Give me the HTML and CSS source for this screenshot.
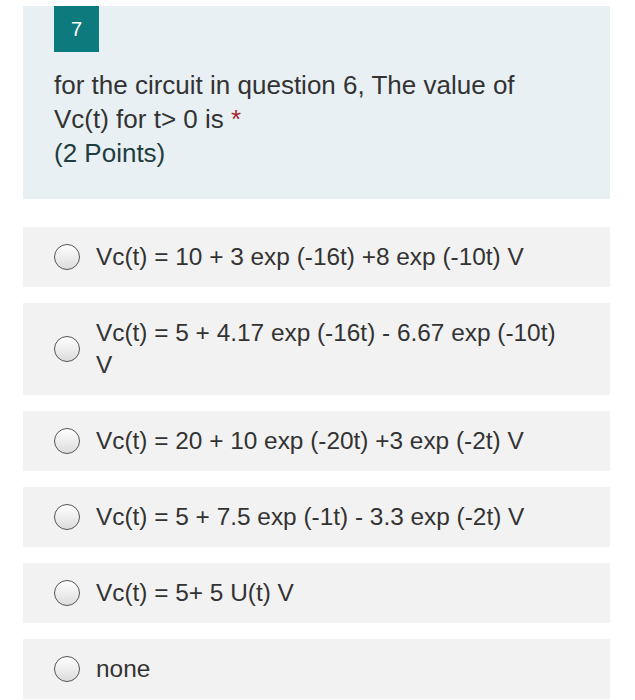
FILE: index.html
```html
<!DOCTYPE html>
<html>
<head>
<meta charset="utf-8">
<link rel="stylesheet" href="styles.css">
</head>
<body>
<div class="page">
  <div class="question">
    <div class="badge">7</div>
    <div class="title">for the circuit in question 6, The value of Vc(t) for t&gt; 0 is <span class="req">*</span></div>
    <div class="points">(2 Points)</div>
  </div>
  <div class="options">
    <div class="option"><span class="radio"></span><span class="label">Vc(t) = 10 + 3 exp (-16t) +8 exp (-10t) V</span></div>
    <div class="option"><span class="radio"></span><span class="label">Vc(t) = 5 + 4.17 exp (-16t) - 6.67 exp (-10t) V</span></div>
    <div class="option"><span class="radio"></span><span class="label">Vc(t) = 20 + 10 exp (-20t) +3 exp (-2t) V</span></div>
    <div class="option"><span class="radio"></span><span class="label">Vc(t) = 5 + 7.5 exp (-1t) - 3.3 exp (-2t) V</span></div>
    <div class="option"><span class="radio"></span><span class="label">Vc(t) = 5+ 5 U(t) V</span></div>
    <div class="option"><span class="radio"></span><span class="label">none</span></div>
  </div>
</div>
</body>
</html>
```
FILE: styles.css
```css
html, body {
  margin: 0;
  padding: 0;
  background: #ffffff;
}
body {
  font-family: "Liberation Sans", Arial, sans-serif;
  color: #333333;
}
.page {
  padding: 6px 25px 0 23px;
}
.question {
  background: #e8f0f3;
  padding: 0 40px 29px 31px;
}
.badge {
  width: 45px;
  height: 46px;
  background: #0d7a7d;
  color: #ffffff;
  font-size: 20px;
  display: flex;
  align-items: center;
  justify-content: center;
}
.title {
  margin-top: 16px;
  font-size: 26px;
  line-height: 34px;
  color: #333333;
}
.req {
  color: #a4262c;
}
.points {
  font-size: 26px;
  line-height: 34px;
  color: #1f3d3f;
}
.options {
  margin-top: 28px;
  display: flex;
  flex-direction: column;
  gap: 16px;
}
.option {
  background: #f2f2f2;
  display: flex;
  align-items: center;
  padding: 14px 40px 14px 31px;
  gap: 16px;
}
.radio {
  flex: none;
  width: 24px;
  height: 24px;
  border: 1.5px solid #555555;
  border-radius: 50%;
  background: linear-gradient(#ffffff, #dcdcdc);
}
.label {
  font-size: 24.4px;
  line-height: 32px;
  color: #333333;
}
```
